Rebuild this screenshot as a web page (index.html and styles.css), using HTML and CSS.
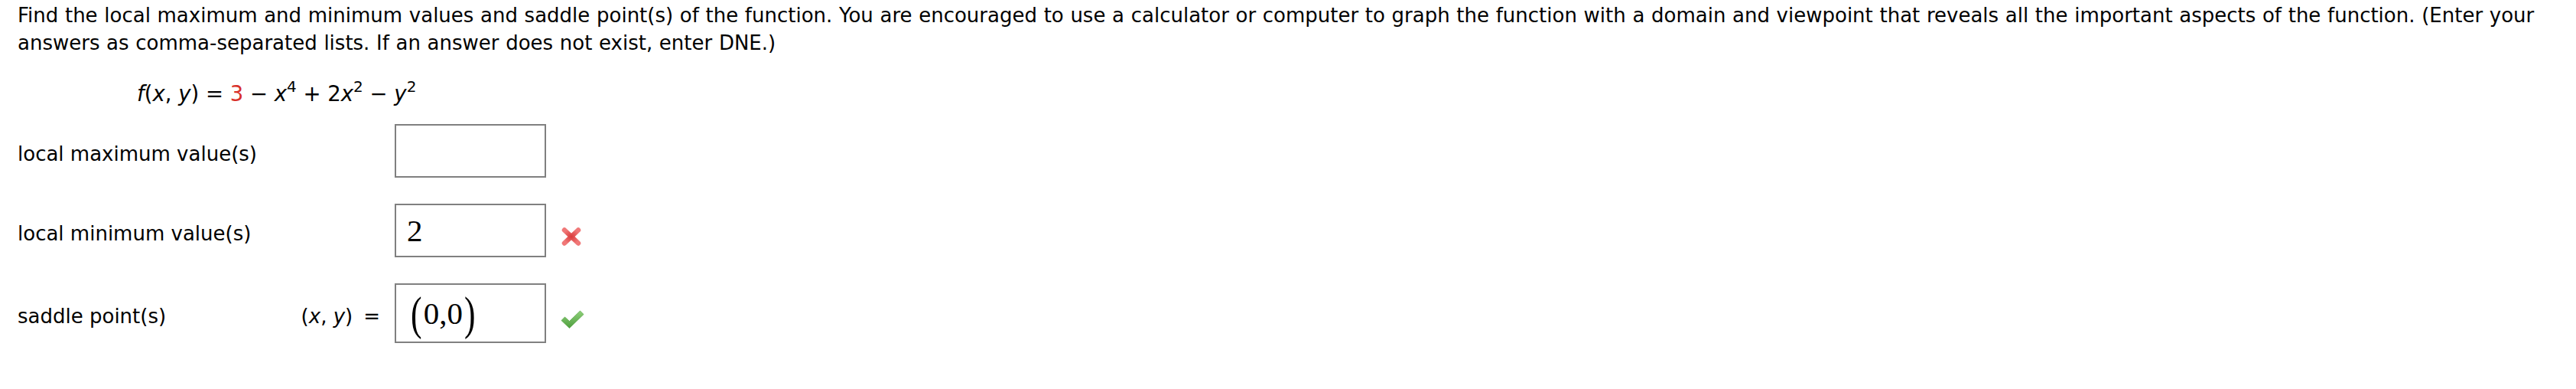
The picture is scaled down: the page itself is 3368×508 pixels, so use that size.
FILE: index.html
```html
<!DOCTYPE html>
<html lang="en">
<head>
<meta charset="utf-8">
<title>Local extrema and saddle points</title>
<link rel="stylesheet" href="styles.css">
</head>
<body>
<div class="page">
  <p class="prompt">Find the local maximum and minimum values and saddle point(s) of the function. You are encouraged to use a calculator or computer to graph the function with a domain and viewpoint that reveals all the important aspects of the function. (Enter your answers as comma-separated lists. If an answer does not exist, enter DNE.)</p>
  <div class="formula"><i>f</i>(<i>x</i>, <i>y</i>) = <span class="given">3</span> − <i>x</i><sup>4</sup> + 2<i>x</i><sup>2</sup> − <i>y</i><sup>2</sup></div>
  <div class="answers">
    <div class="row">
      <div class="label">local maximum value(s)</div>
      <div class="prefix"></div>
      <div class="box"></div>
    </div>
    <div class="row">
      <div class="label">local minimum value(s)</div>
      <div class="prefix"></div>
      <div class="box"><span class="math">2</span></div>
      <div class="mark">
        <svg width="28" height="26" viewBox="0 0 28 26" aria-label="incorrect">
          <defs>
            <radialGradient id="xg" cx="50%" cy="50%" r="60%">
              <stop offset="0" stop-color="#d93a3a"/>
              <stop offset="1" stop-color="#f07878"/>
            </radialGradient>
          </defs>
          <g stroke="url(#xg)" stroke-width="6.5" stroke-linecap="round">
            <line x1="5" y1="4.5" x2="23" y2="21.5"/>
            <line x1="23" y1="4.5" x2="5" y2="21.5"/>
          </g>
        </svg>
      </div>
    </div>
    <div class="row">
      <div class="label">saddle point(s)</div>
      <div class="prefix">(<i>x</i>, <i>y</i>)<span class="eq">=</span></div>
      <div class="box box-tall"><span class="math"><span class="paren">(</span>0,0<span class="paren">)</span></span></div>
      <div class="mark">
        <svg width="31" height="24" viewBox="0 0 31 24" aria-label="correct">
          <defs>
            <linearGradient id="cg" x1="0" y1="0" x2="0" y2="1">
              <stop offset="0" stop-color="#8fd07a"/>
              <stop offset="1" stop-color="#4e9e3e"/>
            </linearGradient>
          </defs>
          <path d="M1 13.5 L5.5 9 L11.5 14.5 L25.5 1 L30 5.5 L11.5 23.5 Z" fill="url(#cg)" stroke="#5aa848" stroke-width="0.8" stroke-linejoin="round"/>
        </svg>
      </div>
    </div>
  </div>
</div>
</body>
</html>
```

FILE: styles.css
```css
html, body {
  margin: 0;
  padding: 0;
  background: #ffffff;
}

.page {
  padding: 2px 0 0 23px;
  font-family: "DejaVu Sans", Verdana, sans-serif;
  font-size: 26px;
  color: #000000;
}

.prompt {
  margin: 0;
  line-height: 36px;
  padding-right: 20px;
  word-spacing: 0.4px;
}

.formula {
  margin: 30px 0 0 156px;
  line-height: 36px;
  font-size: 27.5px;
}

.formula sup {
  font-size: 20px;
  line-height: 0;
  vertical-align: 12px;
}

.given {
  color: #d8302a;
}

.answers {
  margin-top: 22px;
  display: flex;
  flex-direction: column;
  gap: 34px;
}

.row {
  display: flex;
  align-items: center;
}

.label {
  width: 366px;
  line-height: 36px;
  padding-top: 8px;
}

.prefix {
  width: 127px;
  box-sizing: border-box;
  padding-right: 19px;
  text-align: right;
  line-height: 36px;
  padding-top: 8px;
  white-space: nowrap;
}

.eq {
  margin-left: 14px;
}

.box {
  width: 198px;
  height: 70px;
  box-sizing: border-box;
  border: 2px solid #808080;
  display: flex;
  align-items: center;
  padding-left: 14px;
}

.box-tall {
  height: 78px;
  padding-left: 17px;
}

.math {
  font-family: "Liberation Serif", "Times New Roman", serif;
  font-size: 41px;
  line-height: 1;
  display: flex;
  align-items: center;
}

.paren {
  font-size: 56px;
  line-height: 1;
  transform: scale(0.78, 1.08);
}

.mark {
  margin-left: 19px;
  padding-top: 16px;
  display: flex;
}
```
